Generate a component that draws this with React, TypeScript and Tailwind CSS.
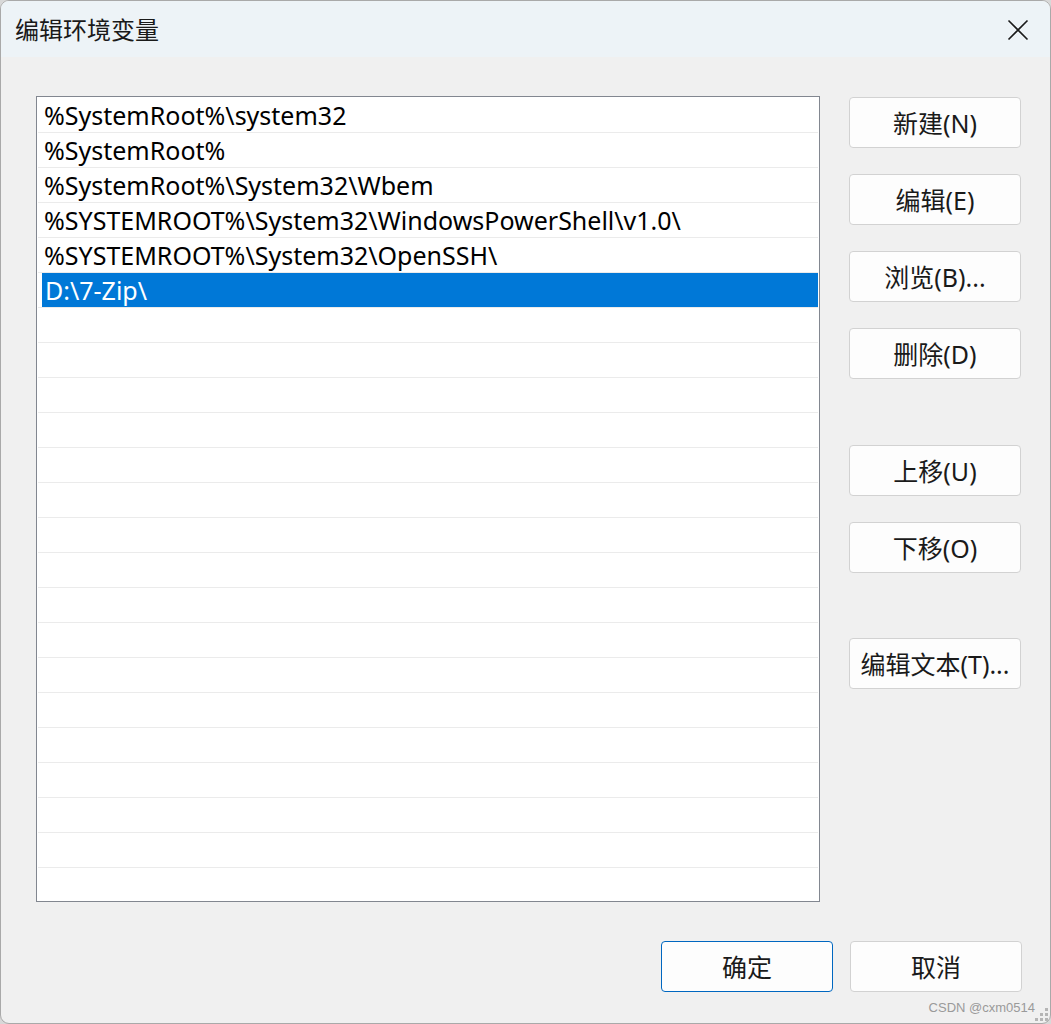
import React from "react";

const rows = [
  "%SystemRoot%\\system32",
  "%SystemRoot%",
  "%SystemRoot%\\System32\\Wbem",
  "%SYSTEMROOT%\\System32\\WindowsPowerShell\\v1.0\\",
  "%SYSTEMROOT%\\System32\\OpenSSH\\",
  "D:\\7-Zip\\",
];
const emptyRows = 17;

function Btn({ label, primary }: { label: string; primary?: boolean }) {
  return (
    <button
      className={
        "w-[172px] h-[51px] rounded-[4px] bg-[#fdfdfd] text-[25px] leading-none text-[#1a1a1a] flex items-center justify-center pt-[1px] " +
        (primary ? "border border-[#0067c0]" : "border border-[#d2d2d2]")
      }
    >
      {label}
    </button>
  );
}

export default function App() {
  return (
    <div
      className="w-[1051px] h-[1024px] bg-[#d8d8d8] overflow-hidden"
      style={{ fontFamily: '"Noto Sans", "Noto Sans CJK SC", sans-serif' }}
    >
      <div className="w-full h-full rounded-[9px] border border-[#a9a9a9] bg-[#f0f0f0] overflow-hidden flex flex-col relative">
        <div className="h-[56px] shrink-0 bg-[#edf3f7] flex items-center justify-between pl-[14px] pr-[21px]">
          <span className="text-[24px] leading-none text-[#1a1a1a]" style={{ fontFamily: '"Noto Sans CJK SC", sans-serif' }}>
            编辑环境变量
          </span>
          <svg width="22" height="22" viewBox="0 0 22 22" className="mt-[1px]">
            <path d="M1.5 1.5 L20.5 20.5 M20.5 1.5 L1.5 20.5" stroke="#1a1a1a" strokeWidth="1.6" fill="none" />
          </svg>
        </div>
        <div className="flex pl-[35px] pt-[39px]">
          <div className="w-[784px] h-[806px] border border-[#828790] bg-white flex flex-col pt-[1px] px-[1px] overflow-hidden">
            {rows.map((r, i) => (
              <div key={i} className="h-[35px] shrink-0 border-b border-[#ebebeb] flex">
                <div
                  className={
                    "flex-1 flex items-center text-[25px] leading-none " +
                    (i === rows.length - 1 ? "bg-[#0078d7] text-white ml-[4px] pl-[3px]" : "text-black pl-[6px]")
                  }
                >
                  {r}
                </div>
              </div>
            ))}
            {Array.from({ length: emptyRows }).map((_, i) => (
              <div key={"e" + i} className="h-[35px] shrink-0 border-b border-[#ebebeb]" />
            ))}
          </div>
          <div className="flex flex-col ml-[29px] pt-[1px]">
            <Btn label="新建(N)" />
            <div className="h-[26px]" />
            <Btn label="编辑(E)" />
            <div className="h-[26px]" />
            <Btn label="浏览(B)..." />
            <div className="h-[26px]" />
            <Btn label="删除(D)" />
            <div className="h-[66px]" />
            <Btn label="上移(U)" />
            <div className="h-[26px]" />
            <Btn label="下移(O)" />
            <div className="h-[65px]" />
            <Btn label="编辑文本(T)..." />
          </div>
        </div>
        <div className="flex justify-end gap-[17px] pr-[28px] mt-[39px]">
          <Btn label="确定" primary />
          <Btn label="取消" />
        </div>
        <div className="absolute right-[15px] bottom-[6px] text-[13px] text-[#9a9a9a]" style={{ fontFamily: '"Liberation Sans", sans-serif' }}>
          CSDN @cxm0514
        </div>
        <div className="absolute right-[2px] bottom-[2px] grid grid-cols-3 gap-[2px]">
          {[0, 0, 1, 0, 1, 1, 1, 1, 1].map((v, i) => (
            <div key={i} className={"w-[3px] h-[3px] " + (v ? "bg-[#b5b5b5]" : "bg-transparent")} />
          ))}
        </div>
      </div>
    </div>
  );
}
